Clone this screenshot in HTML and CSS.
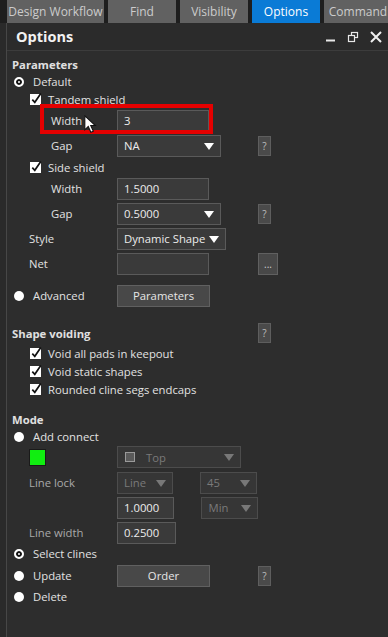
FILE: index.html
```html
<!DOCTYPE html>
<html lang="en">
<head>
  <meta charset="UTF-8">
  <meta name="viewport" content="width=device-width, initial-scale=1.0">
  <title>Options</title>
  <link rel="stylesheet" href="styles.css">
</head>
<body>
  <div class="tabs">
    <div class="tab tab-wide">Design Workflow</div>
    <div class="tab">Find</div>
    <div class="tab">Visibility</div>
    <div class="tab active">Options</div>
    <div class="tab">Command</div>
  </div>

  <div class="frame">
    <div class="window">
      <div class="titlebar">
        <span class="title">Options</span>
        <svg class="win-btns" width="70" height="27" viewBox="0 0 70 27">
          <line x1="8" y1="17.5" x2="17" y2="17.5" stroke="#e8e8e8" stroke-width="2"/>
          <rect x="33.5" y="9.5" width="6" height="5" fill="none" stroke="#e8e8e8" stroke-width="1.2"/>
          <rect x="30.5" y="12.5" width="6" height="6" fill="#2b2b2b" stroke="#e8e8e8" stroke-width="1.2"/>
          <path d="M53 9 L63 19 M63 9 L53 19" stroke="#f0f0f0" stroke-width="2"/>
        </svg>
      </div>

      <div class="content">
        <div class="section">Parameters</div>
        <div class="radio-row"><span class="radio on"></span>Default</div>
        <div class="check-row">
          <svg class="check" width="12" height="12" viewBox="0 0 12 12"><rect x="0" y="1" width="11" height="11" fill="#fff"/><path d="M2.3 6.6 L4.8 9.3 L10.8 0.6" fill="none" stroke="#111" stroke-width="1.7"/></svg>
          Tandem shield
        </div>
        <div class="field">
          <span class="lbl sub">Width</span>
          <div class="ctl"><div class="input w91">3</div></div>
          <div class="highlight"></div>
          <svg class="cursor" width="13" height="19" viewBox="0 0 11 16"><path d="M0.7 0.7 L0.7 12.5 L3.6 9.7 L5.8 14.6 L7.9 13.7 L5.7 8.9 L9.6 8.9 Z" fill="#fff" stroke="#111" stroke-width="0.9"/></svg>
        </div>
        <div class="field">
          <span class="lbl sub">Gap</span>
          <div class="ctl"><div class="select w103">NA</div></div>
          <div class="help">?</div>
        </div>
        <div class="check-row">
          <svg class="check" width="12" height="12" viewBox="0 0 12 12"><rect x="0" y="1" width="11" height="11" fill="#fff"/><path d="M2.3 6.6 L4.8 9.3 L10.8 0.6" fill="none" stroke="#111" stroke-width="1.7"/></svg>
          Side shield
        </div>
        <div class="field">
          <span class="lbl sub">Width</span>
          <div class="ctl"><div class="input w91">1.5000</div></div>
        </div>
        <div class="field">
          <span class="lbl sub">Gap</span>
          <div class="ctl"><div class="select w103">0.5000</div></div>
          <div class="help">?</div>
        </div>
        <div class="field">
          <span class="lbl">Style</span>
          <div class="ctl"><div class="select w108">Dynamic Shape</div></div>
        </div>
        <div class="field">
          <span class="lbl">Net</span>
          <div class="ctl"><div class="input w91"></div></div>
          <div class="btn dots">...</div>
        </div>
        <div class="field gap-top">
          <span class="lbl radio-lbl"><span class="radio"></span>Advanced</span>
          <div class="ctl"><div class="btn w92">Parameters</div></div>
        </div>

        <div class="section-row">
          <div class="section">Shape voiding</div>
          <div class="help">?</div>
        </div>
        <div class="check-row">
          <svg class="check" width="12" height="12" viewBox="0 0 12 12"><rect x="0" y="1" width="11" height="11" fill="#fff"/><path d="M2.3 6.6 L4.8 9.3 L10.8 0.6" fill="none" stroke="#111" stroke-width="1.7"/></svg>
          Void all pads in keepout
        </div>
        <div class="check-row">
          <svg class="check" width="12" height="12" viewBox="0 0 12 12"><rect x="0" y="1" width="11" height="11" fill="#fff"/><path d="M2.3 6.6 L4.8 9.3 L10.8 0.6" fill="none" stroke="#111" stroke-width="1.7"/></svg>
          Void static shapes
        </div>
        <div class="check-row">
          <svg class="check" width="12" height="12" viewBox="0 0 12 12"><rect x="0" y="1" width="11" height="11" fill="#fff"/><path d="M2.3 6.6 L4.8 9.3 L10.8 0.6" fill="none" stroke="#111" stroke-width="1.7"/></svg>
          Rounded cline segs endcaps
        </div>

        <div class="section mode">Mode</div>
        <div class="radio-row"><span class="radio"></span>Add connect</div>
        <div class="field short">
          <span class="lbl"><span class="swatch"></span></span>
          <div class="ctl"><div class="select w123 disabled"><span class="layer-box"></span>Top</div></div>
        </div>
        <div class="field nudge">
          <span class="lbl dim">Line lock</span>
          <div class="ctl pair">
            <div class="select w55 disabled">Line</div>
            <div class="select w56 disabled">45</div>
          </div>
        </div>
        <div class="field">
          <span class="lbl"></span>
          <div class="ctl pair">
            <div class="input w58">1.0000</div>
            <div class="select w57 disabled">Min</div>
          </div>
        </div>
        <div class="field">
          <span class="lbl dim">Line width</span>
          <div class="ctl"><div class="input w58">0.2500</div></div>
        </div>
        <div class="radio-row"><span class="radio on"></span>Select clines</div>
        <div class="field nudge">
          <span class="lbl radio-lbl"><span class="radio"></span>Update</span>
          <div class="ctl"><div class="btn w92">Order</div></div>
          <div class="help">?</div>
        </div>
        <div class="radio-row"><span class="radio"></span>Delete</div>
      </div>
    </div>
  </div>
</body>
</html>
```

FILE: styles.css
```css
body {
  margin: 0;
  height: 637px;
  overflow: hidden;
  background-color: #2a2a2a;
  font-family: "Open Sans", "Noto Sans", sans-serif;
  font-size: 11.3px;
  color: #e2e2e2;
}

/* top tab strip */
.tabs {
  display: flex;
  gap: 4px;
  height: 23px;
  padding-left: 7px;
  background-color: #1e1e1e;
  overflow: hidden;
}

.tab {
  flex: none;
  width: 68px;
  display: flex;
  align-items: center;
  justify-content: center;
  background-color: #616161;
  color: #cccccc;
  font-size: 12px;
}

.tab-wide {
  width: 97px;
}

.tab.active {
  background-color: #0a7bd6;
  color: #ffffff;
}

.frame {
  display: flex;
  height: 614px;
  padding-left: 6px;
}

.window {
  flex: 1;
  border-left: 1px solid #474747;
  background-color: #2d2d2d;
}

.titlebar {
  display: flex;
  align-items: center;
  height: 27px;
  padding-left: 9px;
  background-color: #2b2b2b;
  border-bottom: 1px solid #3c3c3c;
}

.title {
  font-size: 14.5px;
  font-weight: bold;
  color: #f2f2f2;
}

.win-btns {
  margin-left: auto;
}

.content {
  padding: 4px 0 0 5px;
}

/* rows */
.section {
  height: 18px;
  display: flex;
  align-items: center;
  font-weight: bold;
  color: #e0e0e0;
}

.section.mode {
  margin-top: 12px;
}

.section-row {
  display: flex;
  align-items: center;
  height: 22px;
  margin-top: 14px;
}

.section-row .help {
  margin-left: auto;
  margin-right: 117px;
}

.radio-row {
  display: flex;
  align-items: center;
  gap: 9px;
  height: 17px;
  padding-left: 2px;
}

.check-row {
  display: flex;
  align-items: center;
  gap: 6px;
  height: 18px;
  padding-left: 18px;
}

.check {
  flex: none;
}

.radio {
  flex: none;
  width: 10px;
  height: 10px;
  border-radius: 50%;
  background-color: #ffffff;
  box-sizing: border-box;
}

.radio.on {
  border: 2px solid #ffffff;
  background-color: #ffffff;
  box-shadow: inset 0 0 0 2px #111111;
}

.field {
  position: relative;
  display: flex;
  align-items: center;
  height: 25px;
}

.field.short {
  height: 24px;
}

.field.gap-top {
  margin-top: 7px;
}

.field.nudge {
  margin-top: 1px;
}

.lbl {
  flex: none;
  width: 105px;
  box-sizing: border-box;
  padding-left: 17px;
  display: flex;
  align-items: center;
}

.lbl.sub {
  padding-left: 39px;
}

.lbl.dim {
  color: #a9a9a9;
}

.radio-lbl {
  padding-left: 2px;
  gap: 9px;
}

.ctl {
  flex: none;
  width: 141px;
  display: flex;
}

.pair {
  gap: 27px;
}

/* controls */
.input,
.select,
.btn {
  height: 22px;
  box-sizing: border-box;
  display: flex;
  align-items: center;
  padding-left: 6px;
  border: 1px solid #5a5a5a;
  background-color: #3a3a3a;
  color: #ececec;
}

.select {
  position: relative;
}

.select::after {
  content: "";
  position: absolute;
  right: 6px;
  top: 7px;
  border-left: 5px solid transparent;
  border-right: 5px solid transparent;
  border-top: 7px solid #ffffff;
}

.select.disabled {
  color: #7a7a7a;
  border-color: #4c4c4c;
  background-color: #363636;
}

.select.disabled::after {
  border-top-color: #787878;
}

.btn {
  justify-content: center;
  padding-left: 0;
  background-color: #484848;
  border-color: #606060;
  color: #e6e6e6;
}

.w55 { width: 56px; }
.w56 { width: 57px; }
.w57 { width: 58px; }
.w58 { width: 59px; }
.w91 { width: 92px; }
.w92 { width: 93px; }
.w103 { width: 104px; }
.w108 { width: 109px; }
.w123 { width: 124px; }

.help {
  flex: none;
  width: 13px;
  height: 20px;
  box-sizing: border-box;
  display: flex;
  align-items: center;
  justify-content: center;
  background-color: #4a4a4a;
  border: 1px solid #5e5e5e;
  color: #bdbdbd;
  font-size: 10px;
}

.dots {
  width: 20px;
  align-items: flex-end;
  padding-bottom: 3px;
  font-size: 10px;
  color: #cfcfcf;
}

.swatch {
  width: 17px;
  height: 17px;
  box-sizing: border-box;
  background-color: #11ee11;
  border: 1px solid #1a1a1a;
}

.layer-box {
  width: 8px;
  height: 8px;
  margin: 0 11px 0 1px;
  border: 1px solid #9a9a9a;
  background-color: #5a5a5a;
}

/* annotation overlay */
.highlight {
  position: absolute;
  left: 28px;
  top: -4px;
  width: 173px;
  height: 30px;
  box-sizing: border-box;
  border: 4px solid #e50000;
}

.cursor {
  position: absolute;
  left: 72px;
  top: 7px;
}
```
